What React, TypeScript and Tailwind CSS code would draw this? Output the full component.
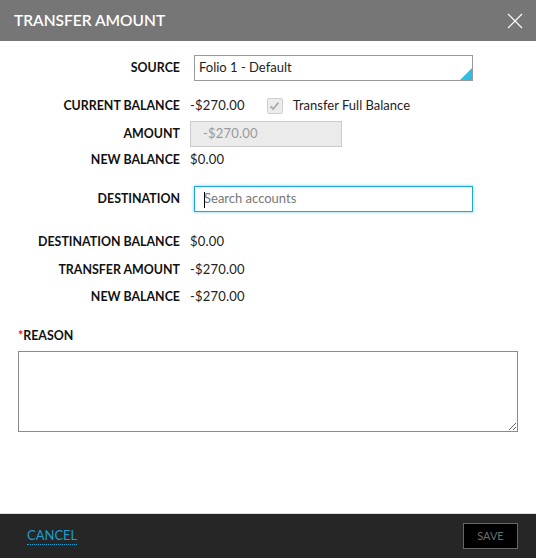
import React from 'react';

const font = { fontFamily: 'Lato, "Open Sans", Arial, sans-serif' };

function Label({ children }: { children: React.ReactNode }) {
  return (
    <div className="w-[180px] shrink-0 text-right text-[12.4px] font-bold uppercase text-[#111]">
      {children}
    </div>
  );
}

function Row({ label, children, className = '' }: { label: string; children: React.ReactNode; className?: string }) {
  return (
    <div className={`flex items-center gap-[10px] ${className}`}>
      <Label>{label}</Label>
      <div className="flex items-center text-[13px] tracking-[0.2px] text-[#222]">{children}</div>
    </div>
  );
}

export default function App() {
  return (
    <div style={font} className="flex h-[558px] w-[536px] flex-col bg-white">
      <div className="flex h-[41px] shrink-0 items-center justify-between bg-[#767676] pl-[14px] pr-[13px]">
        <h1 className="text-[15.5px] font-semibold text-white">TRANSFER AMOUNT</h1>
        <svg width="16" height="16" viewBox="0 0 16 16" className="text-white">
          <path d="M1 1 L15 15 M15 1 L1 15" stroke="currentColor" strokeWidth="1.2" />
        </svg>
      </div>

      <div className="flex-1 pt-[14px]">
        <Row label="Source" className="h-[26px]">
          <div className="relative ml-1 flex h-[26px] w-[279px] items-center border border-[#999] pl-[4px] text-[13px] tracking-normal text-[#222]">
            Folio 1 - Default
            <div className="absolute bottom-0 right-0 h-0 w-0 border-b-[12px] border-l-[12px] border-b-[#2bc0e4] border-l-transparent" />
          </div>
        </Row>

        <Row label="Current Balance" className="mt-[17px] h-[16px]">
          <span>-$270.00</span>
          <span className="ml-[22px] flex h-[16px] w-[16px] items-center justify-center rounded-[2px] border border-[#cfcfcf] bg-[#ececec]">
            <svg width="11" height="10" viewBox="0 0 11 10">
              <path d="M1.5 5.5 L4.2 8 L9.5 1.5" stroke="#a9a9a9" strokeWidth="1.8" fill="none" />
            </svg>
          </span>
          <span className="ml-[10px] tracking-normal">Transfer Full Balance</span>
        </Row>

        <Row label="Amount" className="mt-[7px] h-[26px]">
          <div className="flex h-[26px] w-[152px] items-center border border-[#cccccc] bg-[#ebebeb] pl-[12px] text-[#9a9a9a]">
            -$270.00
          </div>
        </Row>

        <Row label="New Balance" className="mt-[5px] h-[16px]">
          <span>$0.00</span>
        </Row>

        <Row label="Destination" className="mt-[18px] h-[26px]">
          <div className="relative ml-1 flex h-[26px] w-[279px] items-center border border-[#1ba8d8] pl-[9px] text-[13px] tracking-normal text-[#777] shadow-[0_0_3px_rgba(27,168,216,0.6)]">
            <span className="absolute left-[9px] top-[5px] h-[16px] w-px bg-black" />
            Search accounts
          </div>
        </Row>

        <Row label="Destination Balance" className="mt-[22px] h-[16px]">
          <span>$0.00</span>
        </Row>

        <Row label="Transfer Amount" className="mt-[12px] h-[16px]">
          <span>-$270.00</span>
        </Row>

        <Row label="New Balance" className="mt-[11px] h-[16px]">
          <span>-$270.00</span>
        </Row>

        <div className="mt-[23px] px-[18px]">
          <div className="h-[16px] text-[12.4px] font-bold uppercase leading-[16px] text-[#111]">
            <span className="text-[#e52222]">*</span>REASON
          </div>
          <textarea className="mt-[7px] block h-[81px] w-[500px] border border-[#8a8a8a] bg-white outline-none" />
        </div>
      </div>

      <div className="flex h-[45px] shrink-0 items-center justify-between border-t border-[#dcdcdc] bg-[#262626] pl-[27px] pr-[18px]">
        <button className="border-b border-dotted border-[#1a9fd2] text-[13px] leading-[17px] text-[#1a9fd2]">CANCEL</button>
        <button className="flex h-[26px] w-[55px] items-center justify-center border border-[#666] bg-black text-[11px] text-[#6e6e6e]">
          SAVE
        </button>
      </div>
    </div>
  );
}
